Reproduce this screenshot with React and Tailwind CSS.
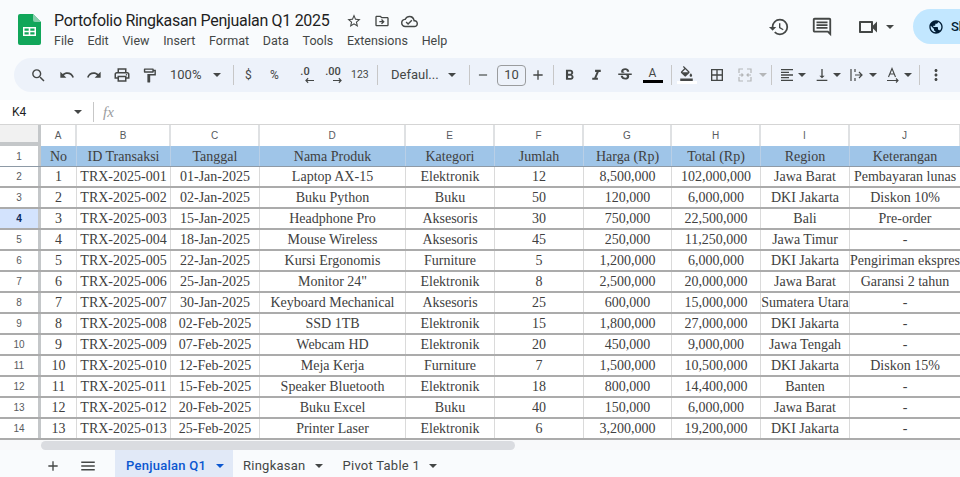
import {
  MdAdd, MdBorderAll, MdFormatAlignLeft, MdFormatBold, MdFormatColorFill, MdFormatItalic,
  MdMenu, MdMoreVert, MdOutlineCloudDone, MdOutlineComment, MdOutlineDriveFileMove,
  MdOutlineFormatPaint, MdOutlinePrint, MdOutlineVideocam, MdPublic, MdRedo, MdRemove,
  MdHistory, MdSearch, MdStarBorder, MdStrikethroughS, MdUndo, MdVerticalAlignBottom,
} from "react-icons/md";

const menus = ["File", "Edit", "View", "Insert", "Format", "Data", "Tools", "Extensions", "Help"];
const letters = ["A", "B", "C", "D", "E", "F", "G", "H", "I", "J"];
const widths = ["w-[36px]", "w-[94px]", "w-[89px]", "w-[146px]", "w-[89px]", "w-[89px]", "w-[88px]", "w-[89px]", "w-[89px]", "w-[111px]"];

const header = ["No", "ID Transaksi", "Tanggal", "Nama Produk", "Kategori", "Jumlah", "Harga (Rp)", "Total (Rp)", "Region", "Keterangan"];
const rows = [
  ["1", "TRX-2025-001", "01-Jan-2025", "Laptop AX-15", "Elektronik", "12", "8,500,000", "102,000,000", "Jawa Barat", "Pembayaran lunas"],
  ["2", "TRX-2025-002", "02-Jan-2025", "Buku Python", "Buku", "50", "120,000", "6,000,000", "DKI Jakarta", "Diskon 10%"],
  ["3", "TRX-2025-003", "15-Jan-2025", "Headphone Pro", "Aksesoris", "30", "750,000", "22,500,000", "Bali", "Pre-order"],
  ["4", "TRX-2025-004", "18-Jan-2025", "Mouse Wireless", "Aksesoris", "45", "250,000", "11,250,000", "Jawa Timur", "-"],
  ["5", "TRX-2025-005", "22-Jan-2025", "Kursi Ergonomis", "Furniture", "5", "1,200,000", "6,000,000", "DKI Jakarta", "Pengiriman ekspres"],
  ["6", "TRX-2025-006", "25-Jan-2025", 'Monitor 24"', "Elektronik", "8", "2,500,000", "20,000,000", "Jawa Barat", "Garansi 2 tahun"],
  ["7", "TRX-2025-007", "30-Jan-2025", "Keyboard Mechanical", "Aksesoris", "25", "600,000", "15,000,000", "Sumatera Utara", "-"],
  ["8", "TRX-2025-008", "02-Feb-2025", "SSD 1TB", "Elektronik", "15", "1,800,000", "27,000,000", "DKI Jakarta", "-"],
  ["9", "TRX-2025-009", "07-Feb-2025", "Webcam HD", "Elektronik", "20", "450,000", "9,000,000", "Jawa Tengah", "-"],
  ["10", "TRX-2025-010", "12-Feb-2025", "Meja Kerja", "Furniture", "7", "1,500,000", "10,500,000", "DKI Jakarta", "Diskon 15%"],
  ["11", "TRX-2025-011", "15-Feb-2025", "Speaker Bluetooth", "Elektronik", "18", "800,000", "14,400,000", "Banten", "-"],
  ["12", "TRX-2025-012", "20-Feb-2025", "Buku Excel", "Buku", "40", "150,000", "6,000,000", "Jawa Barat", "-"],
  ["13", "TRX-2025-013", "25-Feb-2025", "Printer Laser", "Elektronik", "6", "3,200,000", "19,200,000", "DKI Jakarta", "-"],
];

function Caret({ className = "", color = "border-t-[#444746]" }) {
  return <span className={`block w-0 h-0 shrink-0 border-x-4 border-x-transparent border-t-4 ${color} ${className}`} />;
}

function Sep({ className = "" }) {
  return <span className={`block w-px h-5 shrink-0 bg-[#c7c7c7] ${className}`} />;
}

function Logo() {
  return (
    <svg width="23" height="31" viewBox="0 0 23 31" className="shrink-0">
      <path d="M2 0h13l8 8v21a2 2 0 0 1-2 2H2a2 2 0 0 1-2-2V2a2 2 0 0 1 2-2z" fill="#11a65a" />
      <path d="M15 0l8 8h-6a2 2 0 0 1-2-2z" fill="#87ceac" />
      <path d="M5 13h13v9H5zm1.500 1.500v2.200h4.200v-2.200zm5.800 0v2.200h4.200v-2.200zm-5.800 3.800v2.200h4.200v-2.200zm5.800 0v2.200h4.200v-2.200z" fill="#fff" fillRule="evenodd" />
    </svg>
  );
}

function Merge() {
  return (
    <svg width="14" height="14" viewBox="0 0 14 14" className="ml-[13px] shrink-0" fill="none" stroke="#b4b6b8" strokeWidth="1.200">
      <path d="M1 5V1h4M9 1h4v4M1 9v4h4M9 13h4V9M1 7h4M3.500 5.500 5 7 3.500 8.500M13 7H9M10.500 5.500 9 7l1.500 1.500" />
    </svg>
  );
}

function Wrap() {
  return (
    <svg width="14" height="14" viewBox="0 0 14 14" className="ml-[9px] shrink-0" fill="none" stroke="#444746" strokeWidth="1.200">
      <path d="M1 1v12M5 1v3M5 10v3M5 7h7M9 4l3 3-3 3" />
    </svg>
  );
}

function RotateA() {
  return (
    <svg width="14" height="16" viewBox="0 0 14 16" className="ml-[9px] shrink-0" fill="none" stroke="#444746" strokeWidth="1.100">
      <path d="M2.500 10 6 1.500 9.500 10M3.700 7h4.600M1 13.500h11M10 11.500l2 2-2 2" />
    </svg>
  );
}

function Decimal({ label, left, className }) {
  return (
    <span className={`flex flex-col items-center shrink-0 leading-none ${className}`}>
      <span className="text-[11px] font-medium leading-[10px] text-[#444746]">{label}</span>
      <svg width="9" height="7" viewBox="0 0 10 7" fill="none" stroke="#444746" strokeWidth="1.200" className="ml-2">
        {left ? <path d="M10 3.500H1M3.500 1 1 3.500 3.500 6" /> : <path d="M0 3.500h9M6.500 1 9 3.500 6.500 6" />}
      </svg>
    </span>
  );
}

function Toolbar() {
  return (
    <div className="mt-[1px] ml-[14px] h-[34px] flex items-center rounded-l-full bg-[#edf2fa] text-[#444746] font-['Roboto',sans-serif]">
      <MdSearch size={17} className="ml-[15.5px] shrink-0" />
      <MdUndo size={16} className="ml-[12.5px] shrink-0" />
      <MdRedo size={16} className="ml-[11px] shrink-0" />
      <MdOutlinePrint size={18} className="ml-[11px] shrink-0" />
      <MdOutlineFormatPaint size={17} className="ml-[9.5px] shrink-0" />
      <span className="ml-[12.5px] w-[32px] shrink-0 text-[13px]">100%</span>
      <Caret className="ml-[11px]" />
      <Sep className="ml-[12px]" />
      <span className="ml-[11px] w-[8px] shrink-0 text-[12px]">$</span>
      <span className="ml-[17px] w-[12px] shrink-0 text-[12px]">%</span>
      <Decimal label=".0" left className="ml-[15px] w-[16px]" />
      <Decimal label=".00" className="ml-[11px] w-[18px]" />
      <span className="ml-[9px] w-[18px] shrink-0 text-[10.5px]">123</span>
      <Sep className="ml-[8px]" />
      <span className="ml-[13px] w-[46px] shrink-0 text-[13px] whitespace-nowrap">Defaul...</span>
      <Caret className="ml-[11px]" />
      <Sep className="ml-[13px]" />
      <MdRemove size={14} className="ml-[6px] shrink-0" />
      <span className="ml-[7px] w-[29px] h-[21px] shrink-0 flex items-center justify-center rounded-[4px] border border-[#9a9c9e] text-[13px]">10</span>
      <MdAdd size={16} className="ml-[4px] shrink-0" />
      <Sep className="ml-[7px]" />
      <MdFormatBold size={17} className="ml-[6.5px] shrink-0" />
      <MdFormatItalic size={17} className="ml-[10.5px] shrink-0" />
      <MdStrikethroughS size={18} className="ml-[10.5px] shrink-0" />
      <span className="ml-[8px] w-[22px] shrink-0 flex flex-col items-center">
        <span className="text-[12px] leading-[13px]">A</span>
        <span className="block w-[20px] h-[3px] bg-black" />
      </span>
      <Sep className="ml-[7px]" />
      <span className="ml-[5px] w-[20px] shrink-0 flex flex-col items-center">
        <MdFormatColorFill size={15} />
        <span className="block w-[20px] h-[3px] bg-white" />
      </span>
      <MdBorderAll size={16} className="ml-[12px] shrink-0" />
      <Merge />
      <Caret className="ml-[7px]" color="border-t-[#b4b6b8]" />
      <Sep className="ml-[4px]" />
      <MdFormatAlignLeft size={16} className="ml-[7px] shrink-0" />
      <Caret className="ml-[3px]" />
      <MdVerticalAlignBottom size={16} className="ml-[8px] shrink-0" />
      <Caret className="ml-[3px]" />
      <Wrap />
      <Caret className="ml-[5px]" />
      <RotateA />
      <Caret className="ml-[4px]" />
      <Sep className="ml-[7px]" />
      <MdMoreVert size={18} className="ml-[7px] shrink-0" />
    </div>
  );
}

function Cell({ i, children, head }) {
  return (
    <div className={`${widths[i]} shrink-0 h-full flex items-center justify-center whitespace-nowrap overflow-hidden border-r ${head ? "border-[#b9cfe6]" : "border-[#dadada]"}`}>
      {children}
    </div>
  );
}

function Sheet() {
  return (
    <div className="font-['Liberation_Serif',serif] text-[14px] text-[#404040]">
      <div className="h-[21px] flex font-['Liberation_Sans',sans-serif] text-[10px] text-[#575a5e]">
        <div className="w-[41px] shrink-0 bg-[#f1f1f1] border-r-[3px] border-b-[4px] border-[#c4c7c9]" />
        {letters.map((l, i) => (
          <div key={l} className={`${widths[i]} shrink-0 flex items-center justify-center border-r-2 border-[#dfe1e3]`}>{l}</div>
        ))}
      </div>
      <div className="h-[21px] flex bg-[#9fc5e8] border-b border-[#8e9aa6]">
        <div className="w-[41px] shrink-0 flex items-center justify-center bg-white border-r-[3px] border-[#c4c7c9] font-['Liberation_Sans',sans-serif] text-[10px] text-[#575a5e]">1</div>
        {header.map((h, i) => <Cell key={h} i={i} head>{h}</Cell>)}
      </div>
      {rows.map((r, n) => (
        <div key={r[1]} className="h-[21px] flex border-b-2 border-[#ababab]">
          <div className={`w-[41px] shrink-0 flex items-center justify-center border-r-[3px] border-[#c4c7c9] font-['Liberation_Sans',sans-serif] text-[10px] ${n === 2 ? "bg-[#d3e3fd] font-bold text-[#0b2a5c]" : "text-[#575a5e]"}`}>
            {n + 2}
          </div>
          {r.map((v, i) => <Cell key={i} i={i}>{v}</Cell>)}
        </div>
      ))}
    </div>
  );
}

function Tabs() {
  return (
    <div className="h-[27px] flex items-center bg-[#f9fbfd] font-['Roboto',sans-serif] text-[13px] text-[#444746] tracking-[0.25px]">
      <MdAdd size={16} className="ml-[45px] mt-[4px] shrink-0" />
      <MdMenu size={18} className="ml-[18px] mt-[4px] shrink-0" />
      <div className="ml-[18px] w-[118px] h-full pt-[4px] flex items-center bg-[#e1e9f7] text-[#0b57d0] font-medium">
        <span className="ml-[11px]">Penjualan Q1</span>
        <Caret className="ml-[10px]" color="border-t-[#0b57d0]" />
      </div>
      <span className="ml-[10px] mt-[4px]">Ringkasan</span>
      <Caret className="ml-[9px] mt-[4px]" />
      <span className="ml-[20px] mt-[4px]">Pivot Table 1</span>
      <Caret className="ml-[9px] mt-[4px]" />
    </div>
  );
}

export default function App() {
  return (
    <div className="w-[960px] h-[477px] overflow-hidden bg-white">
      <div className="h-[100px] bg-[#f9fbfd]">
        <div className="h-[57px] flex items-start">
          <div className="ml-[18px] mt-[14px]"><Logo /></div>
          <div className="ml-[13px] mt-[10px] font-['Roboto',sans-serif]">
            <div className="h-[22px] flex items-center text-[#1f1f1f]">
              <span className="text-[16px] tracking-[-0.3px] whitespace-nowrap w-[276px]">Portofolio Ringkasan Penjualan Q1 2025</span>
              <MdStarBorder size={16} className="ml-[16px] text-[#444746]" />
              <MdOutlineDriveFileMove size={16} className="ml-[12px] text-[#444746]" />
              <MdOutlineCloudDone size={17} className="ml-[11px] text-[#444746]" />
            </div>
            <div className="flex gap-[13.8px] text-[12.5px] text-[#444746]">
              {menus.map((m) => <span key={m}>{m}</span>)}
            </div>
          </div>
          <div className="ml-auto mt-[9px] h-[35px] flex items-center text-[#444746]">
            <MdHistory size={22} />
            <MdOutlineComment size={22} className="ml-[21px]" />
            <MdOutlineVideocam size={24} className="ml-[23px]" />
            <Caret className="ml-[6px]" />
            <div className="ml-[19px] w-[60px] -mr-[13px] h-full flex items-center rounded-l-full bg-[#c2e7ff] text-[#001d35] text-[13px] font-['Roboto',sans-serif] font-medium">
              <MdPublic size={16} className="ml-[15px] shrink-0" />
              <span className="ml-[7px]">Share</span>
            </div>
          </div>
        </div>
        <Toolbar />
      </div>
      <div className="h-[25px] flex items-center border-b border-[#d5d5d5] font-['Roboto',sans-serif] text-[#444746]">
        <span className="ml-[12px] w-[62px] text-[12px] text-[#1f1f1f]">K4</span>
        <Caret />
        <Sep className="ml-[11px]" />
        <span className="ml-[9px] font-['Liberation_Serif',serif] italic text-[15px] text-[#9a9c9e]">fx</span>
      </div>
      <Sheet />
      <div className="h-[10px] flex items-center bg-[#f8f9fa]">
        <div className="ml-[41px] w-[474px] h-[9px] rounded-full bg-[#dadce0]" />
      </div>
      <Tabs />
    </div>
  );
}
